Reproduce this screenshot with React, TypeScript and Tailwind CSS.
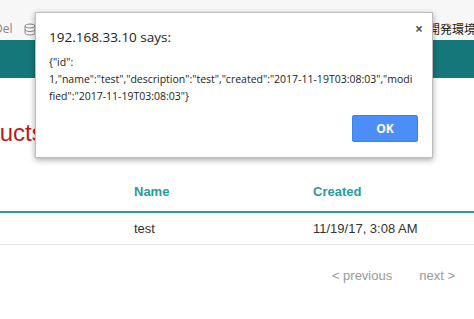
export default function App() {
  return (
    <div className="relative h-[319px] w-[474px] overflow-hidden bg-white font-['Liberation_Sans',Arial,sans-serif]">
      {/* bookmarks bar */}
      <div className="flex h-[40px] items-end justify-between bg-[#f7f7f7] pb-[2px] text-[12px]">
        <div className="flex items-center gap-[12px]">
          <span className="-ml-[6px] text-[#888] font-['Open_Sans',sans-serif]">Del</span>
          <svg width="12" height="13" viewBox="0 0 12 13" className="text-[#888]">
            <ellipse cx="6" cy="3" rx="5" ry="2" fill="none" stroke="currentColor" />
            <path d="M1 3v7c0 1.1 2.2 2 5 2s5-.9 5-2V3M1 6.5c0 1.1 2.2 2 5 2s5-.9 5-2" fill="none" stroke="currentColor" />
          </svg>
        </div>
        <span className="-mr-[2px] text-[#222] font-['Noto_Sans_CJK_JP',sans-serif]">開発環境</span>
      </div>
      {/* teal nav */}
      <div className="h-[38px] bg-[#16777a]" />

      {/* heading */}
      <h1 className="mt-[40px] -ml-[51px] text-[24px] leading-[30px] text-[#c4161c]">Products</h1>

      {/* table */}
      <div className="mt-[34px]">
        <div className="grid grid-cols-[134px_179px_1fr] border-b-2 border-[#2a9a9f] pb-[9px] text-[13px] font-bold text-[#2a9a9f]">
          <span />
          <span>Name</span>
          <span>Created</span>
        </div>
        <div className="grid grid-cols-[134px_179px_1fr] border-b border-[#e6e6e6] py-[6px] text-[13px] text-[#333]">
          <span />
          <span>test</span>
          <span>11/19/17, 3:08 AM</span>
        </div>
        <div className="flex justify-end gap-[27px] pr-[19px] pt-[21px] text-[13px] text-[#999]">
          <span>&lt; previous</span>
          <span>next &gt;</span>
        </div>
      </div>

      {/* alert dialog */}
      <div className="absolute left-[35px] top-[12px] flex h-[146px] w-[398px] flex-col border border-[#bdbdbd] bg-white px-[13px] pt-[14px] font-['Open_Sans',sans-serif] shadow-[0_2px_6px_rgba(0,0,0,0.35)]">
        <div className="flex items-start justify-between">
          <span className="text-[13.5px] text-[#222]">192.168.33.10 says:</span>
          <span className="-mt-[9px] -mr-[4px] text-[14px] font-bold text-[#555]">×</span>
        </div>
        <p className="mt-[7px] break-all text-[10.5px] leading-[17px] text-[#222]">
          {'{"id":'}
          <br />
          {'1,"name":"test","description":"test","created":"2017-11-19T03:08:03","modi'}
          <br />
          {'fied":"2017-11-19T03:08:03"}'}
        </p>
        <div className="mt-auto mb-[15px] flex justify-end">
          <button className="mr-[1px] h-[27px] w-[66px] rounded-[2px] border border-[#3f7fe0] bg-[#4c8ef7] text-[12px] font-bold text-white">
            OK
          </button>
        </div>
      </div>
    </div>
  );
}
